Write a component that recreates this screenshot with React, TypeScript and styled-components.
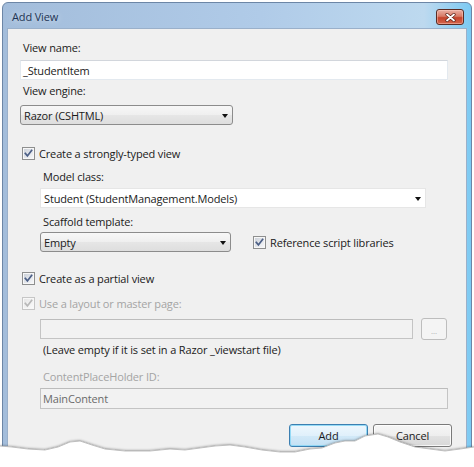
import React from "react";
import styled, { createGlobalStyle } from "styled-components";

const GlobalStyle = createGlobalStyle`
  html, body { margin: 0; padding: 0; background: #fff; }
  body { font-family: "Open Sans", "Noto Sans", sans-serif; font-size: 11px; letter-spacing: -0.15px; color: #1a1a1a; }
  * { box-sizing: border-box; }
`;

const Page = styled.div`
  position: relative;
  width: 474px;
  height: 467px;
  overflow: hidden;
  background: #fff;
`;

const Window = styled.div`
  margin: 2px 0 0 2px;
  width: 470px;
  height: 490px;
  border: 1px solid #6c86a6;
  border-radius: 6px 6px 0 0;
  background: linear-gradient(to right, #a3bddb 0%, #b0cbe8 55%, #bdd9ef 90%, #7ccaf3 100%);
  padding: 0 4px;
  display: flex;
  flex-direction: column;
`;

const TitleBar = styled.div`
  height: 25px;
  display: flex;
  align-items: flex-start;
  justify-content: space-between;
  padding: 6px 3px 0 5px;
`;

const TitleText = styled.div`
  font-size: 11px;
  line-height: 16px;
  color: #1d3453;
  text-shadow: 0 0 6px rgba(255, 255, 255, 0.7);
`;

const CloseButton = styled.div`
  width: 28px;
  height: 16px;
  border: 1px solid #5a2c24;
  border-radius: 3px;
  background: linear-gradient(#e9b0a4 0%, #d87a66 45%, #c4432c 55%, #d5664c 100%);
  box-shadow: inset 0 0 0 1px rgba(255, 210, 200, 0.45);
  display: flex;
  align-items: center;
  justify-content: center;
`;

const Panel = styled.div`
  flex: 1;
  background: #f0f0f0;
  border: 1px solid #9ab0ca;
  padding: 11px 0 0 12px;
  display: flex;
  flex-direction: column;
  align-items: flex-start;
`;

const Label = styled.div<{ $mt?: number; $disabled?: boolean }>`
  margin-top: ${(p) => p.$mt ?? 0}px;
  padding-left: 3px;
  line-height: 16px;
  height: 16px;
  color: ${(p) => (p.$disabled ? "#a4a4a4" : "#1a1a1a")};
  white-space: nowrap;
`;

const TextBox = styled.div<{ $w: number; $h?: number; $mt?: number; $disabled?: boolean }>`
  margin-top: ${(p) => p.$mt ?? 0}px;
  width: ${(p) => p.$w}px;
  height: ${(p) => p.$h ?? 20}px;
  border: 1px solid ${(p) => (p.$disabled ? "#c4c4c4" : "#e3e9ef")};
  border-top-color: ${(p) => (p.$disabled ? "#bcbcbc" : "#d2d6dc")};
  background: ${(p) => (p.$disabled ? "#f2f2f2" : "#fff")};
  color: ${(p) => (p.$disabled ? "#6a6a6a" : "#1a1a1a")};
  padding-left: 2px;
  display: flex;
  align-items: center;
  white-space: nowrap;
`;

const Select = styled.div<{ $w: number; $mt?: number; $editable?: boolean }>`
  margin-top: ${(p) => p.$mt ?? 0}px;
  width: ${(p) => p.$w}px;
  height: 20px;
  border: 1px solid ${(p) => (p.$editable ? "#e6e6e6" : "#8c8c8c")};
  border-radius: ${(p) => (p.$editable ? 0 : 3)}px;
  background: ${(p) =>
    p.$editable ? "#fff" : "linear-gradient(#f7f7f7 0%, #efefef 50%, #e6e6e6 51%, #dedede 100%)"};
  padding: 0 4px 0 3px;
  display: flex;
  align-items: center;
  justify-content: space-between;
  white-space: nowrap;
  flex-shrink: 0;
`;

const Arrow = styled.span`
  width: 0;
  height: 0;
  border-left: 3.5px solid transparent;
  border-right: 3.5px solid transparent;
  border-top: 4px solid #111;
  margin-top: 1px;
`;

const CheckRow = styled.div<{ $mt?: number; $ml?: number; $disabled?: boolean }>`
  margin-top: ${(p) => p.$mt ?? 0}px;
  margin-left: ${(p) => p.$ml ?? 2}px;
  height: 16px;
  display: flex;
  align-items: center;
  gap: 4px;
  color: ${(p) => (p.$disabled ? "#a4a4a4" : "#1a1a1a")};
  white-space: nowrap;
`;

const Indent = styled.div`
  padding-left: 20px;
  display: flex;
  flex-direction: column;
  align-items: flex-start;
`;

const Row = styled.div<{ $mt?: number; $gap?: number }>`
  margin-top: ${(p) => p.$mt ?? 0}px;
  display: flex;
  align-items: center;
  gap: ${(p) => p.$gap ?? 0}px;
`;

const BrowseButton = styled.div`
  width: 26px;
  height: 22px;
  border: 1px solid #bdbdbd;
  border-radius: 3px;
  background: #f4f4f4;
  color: #b0b0b0;
  font-size: 8px;
  display: flex;
  align-items: center;
  justify-content: center;
  padding-top: 2px;
`;

const ButtonBar = styled.div`
  margin-top: 15px;
  align-self: stretch;
  padding-right: 14px;
  display: flex;
  justify-content: flex-end;
  gap: 5px;
`;

const Button = styled.div<{ $primary?: boolean }>`
  width: 79px;
  height: 23px;
  border: 1px solid ${(p) => (p.$primary ? "#3c7fb1" : "#7a7a7a")};
  border-radius: 3px;
  background: ${(p) =>
    p.$primary
      ? "linear-gradient(#eef7fd 0%, #e0f0fb 50%, #d2e9f8 51%, #c4e1f4 100%)"
      : "linear-gradient(#f6f6f6 0%, #eeeeee 50%, #e2e2e2 51%, #d8d8d8 100%)"};
  box-shadow: ${(p) =>
    p.$primary
      ? "inset 0 0 0 1px rgba(140, 215, 245, 0.9)"
      : "inset 0 0 0 1px rgba(255, 255, 255, 0.8)"};
  display: flex;
  align-items: center;
  justify-content: center;
  color: #1a1a1a;
`;

const Torn = styled.svg`
  position: absolute;
  left: 0;
  bottom: 0;
  width: 474px;
  height: 45px;
`;

function CheckBox({ disabled }: { disabled?: boolean }) {
  const id = disabled ? "cbd" : "cbe";
  return (
    <svg width="13" height="13" viewBox="0 0 13 13">
      <defs>
        <linearGradient id={id} x1="0" y1="0" x2="1" y2="1">
          <stop offset="0" stopColor={disabled ? "#e6e6e6" : "#cdd2da"} />
          <stop offset="1" stopColor={disabled ? "#fafafa" : "#f6f7f9"} />
        </linearGradient>
      </defs>
      <rect x="0.5" y="0.5" width="12" height="12" fill="#f7f7f7" stroke={disabled ? "#c6c6c6" : "#8e8f8f"} />
      <rect x="2" y="2" width="9" height="9" fill={`url(#${id})`} />
      <path
        d="M3.3 6.4 L5.4 8.9 L9.6 3.4"
        fill="none"
        stroke={disabled ? "#b8b8b8" : "#4c5f86"}
        strokeWidth="1.7"
        strokeLinecap="square"
      />
    </svg>
  );
}

const tornEdge: [number, number][] = [
  [0, 446], [12, 447], [28, 449], [45, 450], [58, 447], [70, 442], [80, 441], [92, 445],
  [105, 449], [125, 451], [150, 451], [170, 449], [185, 450], [200, 448], [215, 446],
  [230, 445], [245, 447], [262, 450], [280, 452], [295, 452], [310, 449], [322, 448],
  [335, 443], [345, 441], [355, 441], [365, 436], [378, 434], [388, 437], [400, 442],
  [415, 447], [430, 449], [445, 451], [460, 449], [474, 447],
];

export default function App() {
  const edge = tornEdge.map(([x, y], i) => `${i === 0 ? "M" : "L"}${x} ${y}`).join(" ");
  return (
    <Page>
      <GlobalStyle />
      <Window>
        <TitleBar>
          <TitleText>Add View</TitleText>
          <CloseButton>
            <svg width="11" height="9" viewBox="0 0 11 9">
              <path d="M2 1.5 L9 7.5 M9 1.5 L2 7.5" stroke="#5a1f14" strokeWidth="3.2" strokeLinecap="round" />
              <path d="M2 1.5 L9 7.5 M9 1.5 L2 7.5" stroke="#fff" strokeWidth="1.8" strokeLinecap="round" />
            </svg>
          </CloseButton>
        </TitleBar>
        <Panel>
          <Label>View name:</Label>
          <TextBox $w={428} $mt={4}>_StudentItem</TextBox>
          <Label $mt={3}>View engine:</Label>
          <Select $w={213} $mt={6}>
            <span>Razor (CSHTML)</span>
            <Arrow />
          </Select>
          <CheckRow $mt={20}>
            <CheckBox />
            <span>Create a strongly-typed view</span>
          </CheckRow>
          <Indent>
            <Label $mt={8}>Model class:</Label>
            <Select $w={386} $mt={3} $editable>
              <span>Student (StudentManagement.Models)</span>
              <Arrow />
            </Select>
            <Label $mt={6}>Scaffold template:</Label>
            <Row $mt={2}>
              <Select $w={191}>
                <span>Empty</span>
                <Arrow />
              </Select>
              <CheckRow $ml={22}>
                <CheckBox />
                <span>Reference script libraries</span>
              </CheckRow>
            </Row>
          </Indent>
          <CheckRow $mt={18}>
            <CheckBox />
            <span>Create as a partial view</span>
          </CheckRow>
          <CheckRow $mt={9} $disabled>
            <CheckBox disabled />
            <span>Use a layout or master page:</span>
          </CheckRow>
          <Indent>
            <Row $mt={7} $gap={8}>
              <TextBox $w={373} $disabled />
              <BrowseButton>...</BrowseButton>
            </Row>
            <Label $mt={2}>(Leave empty if it is set in a Razor _viewstart file)</Label>
            <Label $mt={11} $disabled>ContentPlaceHolder ID:</Label>
            <TextBox $w={408} $h={21} $mt={3} $disabled>MainContent</TextBox>
          </Indent>
          <ButtonBar>
            <Button $primary>Add</Button>
            <Button>Cancel</Button>
          </ButtonBar>
        </Panel>
      </Window>
      <Torn viewBox="0 422 474 45">
        <defs>
          <filter id="tornShadow" x="-5%" y="-50%" width="110%" height="200%">
            <feGaussianBlur in="SourceAlpha" stdDeviation="1.8" />
            <feOffset dy="-0.5" />
            <feComponentTransfer>
              <feFuncA type="linear" slope="0.6" />
            </feComponentTransfer>
            <feMerge>
              <feMergeNode />
              <feMergeNode in="SourceGraphic" />
            </feMerge>
          </filter>
        </defs>
        <path d={`${edge} L474 470 L0 470 Z`} fill="#fff" filter="url(#tornShadow)" />
        <path d={edge} fill="none" stroke="#b9b9b9" strokeWidth="0.9" />
      </Torn>
    </Page>
  );
}
